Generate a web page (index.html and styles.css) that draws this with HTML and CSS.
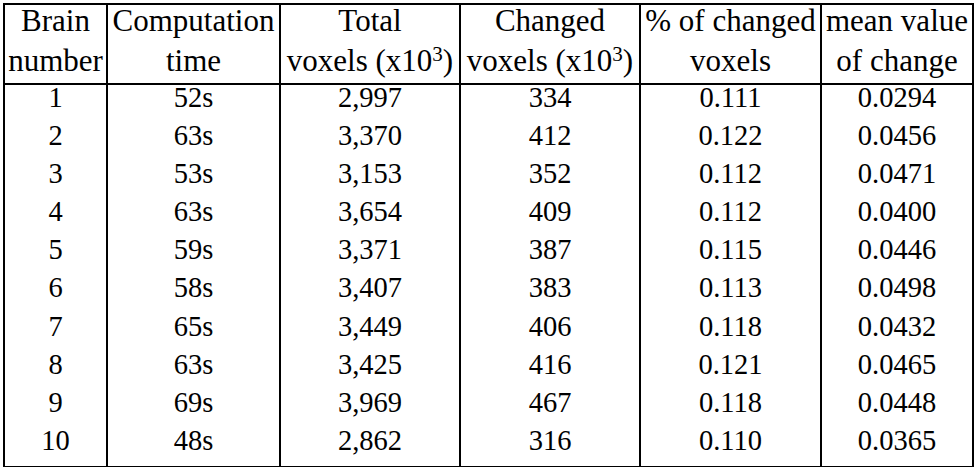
FILE: index.html
```html
<!DOCTYPE html>
<html lang="en">
<head>
<meta charset="utf-8">
<title>Brain voxel change table</title>
<link rel="stylesheet" href="styles.css">
</head>
<body>
<table class="results">
  <colgroup>
    <col class="c1"><col class="c2"><col class="c3"><col class="c4"><col class="c5"><col class="c6">
  </colgroup>
  <thead>
    <tr>
      <th><span class="l1">Brain</span><span class="l2">number</span></th>
      <th><span class="l1">Computation</span><span class="l2">time</span></th>
      <th><span class="l1">Total</span><span class="l2">voxels (x10<sup>3</sup>)</span></th>
      <th><span class="l1">Changed</span><span class="l2">voxels (x10<sup>3</sup>)</span></th>
      <th><span class="l1">% of changed</span><span class="l2">voxels</span></th>
      <th><span class="l1">mean value</span><span class="l2">of change</span></th>
    </tr>
  </thead>
  <tbody>
    <tr><td>1</td><td>52s</td><td>2,997</td><td>334</td><td>0.111</td><td>0.0294</td></tr>
    <tr><td>2</td><td>63s</td><td>3,370</td><td>412</td><td>0.122</td><td>0.0456</td></tr>
    <tr><td>3</td><td>53s</td><td>3,153</td><td>352</td><td>0.112</td><td>0.0471</td></tr>
    <tr><td>4</td><td>63s</td><td>3,654</td><td>409</td><td>0.112</td><td>0.0400</td></tr>
    <tr><td>5</td><td>59s</td><td>3,371</td><td>387</td><td>0.115</td><td>0.0446</td></tr>
    <tr><td>6</td><td>58s</td><td>3,407</td><td>383</td><td>0.113</td><td>0.0498</td></tr>
    <tr><td>7</td><td>65s</td><td>3,449</td><td>406</td><td>0.118</td><td>0.0432</td></tr>
    <tr><td>8</td><td>63s</td><td>3,425</td><td>416</td><td>0.121</td><td>0.0465</td></tr>
    <tr><td>9</td><td>69s</td><td>3,969</td><td>467</td><td>0.118</td><td>0.0448</td></tr>
    <tr><td>10</td><td>48s</td><td>2,862</td><td>316</td><td>0.110</td><td>0.0365</td></tr>
  </tbody>
</table>
</body>
</html>
```

FILE: styles.css
```css
html, body {
  margin: 0;
  background: #ffffff;
}
body {
  padding: 3px 0 0 3px;
  font-family: "Liberation Serif", serif;
  color: #000000;
}
.results {
  border-collapse: collapse;
  table-layout: fixed;
  width: 969px;
  border: 2px solid #000;
}
.c1 { width: 103px; }
.c2 { width: 173px; }
.c3 { width: 180px; }
.c4 { width: 180px; }
.c5 { width: 181px; }
.c6 { width: 152px; }

.results th,
.results td {
  font-family: "Liberation Serif", serif;
  font-weight: 400;
  border-left: 2px solid #000;
  border-right: 2px solid #000;
  text-align: center;
  padding: 0;
  white-space: nowrap;
}
.results thead th {
  font-size: 31px;
  border-bottom: 2px solid #000;
  padding: 0 0 6px;
  vertical-align: top;
}
.l1, .l2 {
  display: block;
  line-height: 32px;
}
.l2 {
  padding-top: 8px;
}
.results sup {
  font-size: 21px;
  line-height: 0;
  vertical-align: 10px;
}
.results tbody td {
  font-size: 28.5px;
  line-height: 26px;
  padding: 0 0 12.1px;
}
```
